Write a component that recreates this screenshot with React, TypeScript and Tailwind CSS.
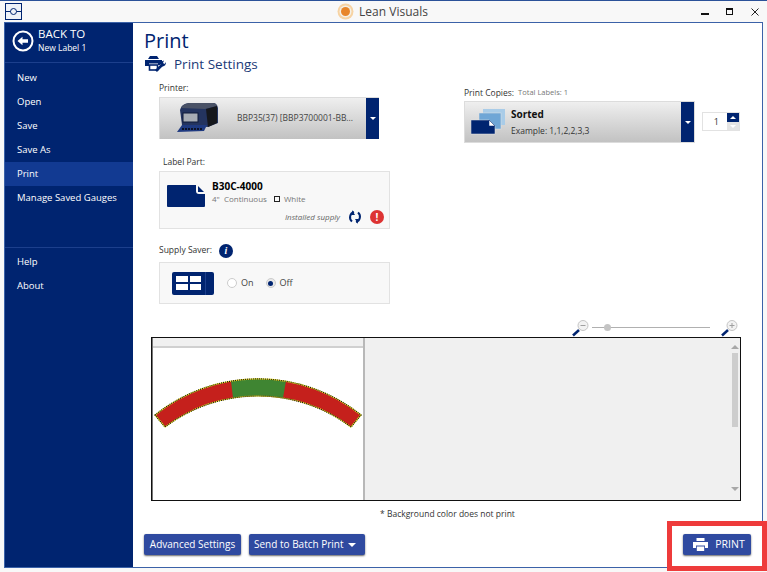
const font = { fontFamily: '"Open Sans", "Noto Sans", sans-serif' }

function NavItem({ label, active }: { label: string; active?: boolean }) {
  return (
    <div className={`h-6 pl-3 flex items-center text-[9.5px] text-white ${active ? 'bg-[#123a92]' : ''}`}>{label}</div>
  )
}

function Sidebar() {
  return (
    <div className="w-[128px] shrink-0 bg-[#002470] flex flex-col">
      <div className="h-10 flex items-center pl-[7px] pb-[4px] gap-[4px] border-b border-[#1c3f8c] shrink-0">
        <svg width="22" height="22" viewBox="0 0 22 22">
          <circle cx="11" cy="11" r="9.5" fill="none" stroke="white" strokeWidth="2" />
          <path d="M5.5 11 L10.5 6.8 V9.2 H16 V12.8 H10.5 V15.2 Z" fill="white" />
        </svg>
        <div className="text-white leading-none">
          <div className="text-[11.5px] leading-[14px]">BACK TO</div>
          <div className="text-[8.5px] leading-[13px]">New Label 1</div>
        </div>
      </div>
      <div className="pt-[3px] pb-[37px] border-b border-[#1c3f8c]">
        <NavItem label="New" />
        <NavItem label="Open" />
        <NavItem label="Save" />
        <NavItem label="Save As" />
        <NavItem label="Print" active />
        <NavItem label="Manage Saved Gauges" />
      </div>
      <div className="pt-[2px]">
        <NavItem label="Help" />
        <NavItem label="About" />
      </div>
    </div>
  )
}

function PrinterPic() {
  return (
    <svg width="41" height="31" viewBox="0 0 41 31">
      <path d="M3 8 Q4 2 12 1 H36 Q40 1 41 6 V21 L31 25 L5 23 Z" fill="#24345f" />
      <path d="M4 6 Q6 2 12 1 H36 Q39 1 40 4 L28 7 Z" fill="#4a5266" />
      <path d="M29 7 L40 4 V21 L31 25 Z" fill="#15171c" />
      <rect x="6" y="11" width="15" height="9" fill="#a8adb5" stroke="#0f1a3a" />
      <path d="M0 30 L5 23 H30 L27 29 Z" fill="#1f3a80" />
      <path d="M5 27 H26" stroke="#0b1228" strokeWidth="2" strokeDasharray="2 1" />
    </svg>
  )
}

function Caret() {
  return <div className="w-0 h-0 border-x-[3px] border-x-transparent border-t-[3px] border-t-white" />
}

function SupplyBox() {
  return (
    <div className="h-[58px] w-[231px] bg-[#f8f8f8] border border-[#e2e2e2] relative flex pl-[7px] pt-[12px]">
      <svg width="39" height="22" viewBox="0 0 39 22" className="mt-[1px]">
        <path d="M1 0 H29 V6 Q29 9 32 9 H38 V21 Q38 22 37 22 H1 Q0 22 0 21 V1 Q0 0 1 0 Z" fill="#002470" />
        <path d="M31 1 L37 7 H31 Z" fill="#002470" />
      </svg>
      <div className="ml-[6px] -mt-[4px]">
        <div className="text-[10px] leading-[13px] font-bold text-black">B30C-4000</div>
        <div className="text-[8px] leading-[11px] text-[#777] flex items-center">
          4" &nbsp;Continuous
          <span className="inline-block w-[6px] h-[6px] border border-[#222] ml-[7px] mr-[4px]" />
          White
        </div>
      </div>
      <div className="absolute right-[5px] bottom-[4px] flex items-center">
        <span className="text-[8px] italic text-[#666] mr-[8px]">Installed supply</span>
        <svg width="14" height="14" viewBox="0 0 14 14" fill="none" stroke="#002470" strokeWidth="2">
          <path d="M6 2 A5.5 5.5 0 0 0 4 11.5" />
          <path d="M8 12 A5.5 5.5 0 0 0 10 2.5" />
          <path d="M4 0 V5 H7 Z M10 14 V9 H7 Z" fill="#002470" strokeWidth="0" />
        </svg>
        <div className="ml-[8px] w-[14px] h-[14px] rounded-full bg-[#dd3333] text-white text-[10px] font-bold flex items-center justify-center leading-none">!</div>
      </div>
    </div>
  )
}

function SaverBox() {
  return (
    <div className="h-[42px] w-[231px] bg-[#f8f8f8] border border-[#e2e2e2] flex items-center pl-[12px]">
      <svg width="42" height="23" viewBox="0 0 42 23">
        <rect width="42" height="23" rx="2" fill="#002470" />
        <rect x="4" y="4" width="12" height="6" fill="white" />
        <rect x="18" y="4" width="11" height="6" fill="white" />
        <rect x="4" y="12" width="12" height="6" fill="white" />
        <rect x="18" y="12" width="11" height="6" fill="white" />
        <rect x="33" y="0" width="1" height="23" fill="#1c3f8c" />
      </svg>
      <div className="ml-[13px] w-[10px] h-[10px] rounded-full border border-[#ccc] bg-white" />
      <span className="ml-[4px] text-[9px] text-[#444]">On</span>
      <div className="ml-[12px] w-[10px] h-[10px] rounded-full border border-[#ccc] bg-[#e8e8e8] flex items-center justify-center">
        <div className="w-[5px] h-[5px] rounded-full bg-[#002470]" />
      </div>
      <span className="ml-[4px] text-[9px] text-[#444]">Off</span>
    </div>
  )
}

function SortedIcon() {
  return (
    <svg width="35" height="26" viewBox="0 0 35 26">
      <rect x="12" y="0" width="22" height="16" fill="#a9cce8" />
      <rect x="8" y="4" width="22" height="16" fill="#6fa6d6" stroke="#e4e4e4" strokeWidth="0.5" />
      <path d="M0 11 H18 L24 17 V25 H0 Z" fill="#002470" stroke="#e4e4e4" strokeWidth="0.5" />
      <path d="M18 11 L24 17 H18 Z" fill="white" stroke="#002470" strokeWidth="0.5" />
    </svg>
  )
}

function Magnifier({ plus }: { plus?: boolean }) {
  return (
    <svg width="18" height="17" viewBox="0 0 18 17">
      <circle cx="11" cy="5.5" r="5" fill="#f2f2f2" stroke="#c4c4c4" />
      <path d={plus ? 'M8.5 5.5 H13.5 M11 3 V8' : 'M8.5 5.5 H13.5'} stroke="#a0a0a0" />
      <path d="M7 10 L1 15.5" stroke="#002470" strokeWidth="2.5" />
    </svg>
  )
}

function Preview() {
  return (
    <div className="h-[164px] w-[590px] ml-[-4px] border border-[#111] flex">
      <div className="w-[211px] shrink-0 flex flex-col border-l border-[#777]">
        <div className="h-[10px] bg-[#f0f0f0] border-b-2 border-[#d0d0d0]" />
        <svg width="210" height="152" viewBox="0 0 210 152">
          <g transform="translate(-153 -348)">
            <path d="M155 415 A165 165 0 0 1 361 415 L351 427 A155 155 0 0 0 165 427 Z" fill="#c5201c" />
            <path d="M231 381 A165 165 0 0 1 286 381 L283 398 A155 155 0 0 0 233 398 Z" fill="#3f8532" />
            <path d="M155 415 A165 165 0 0 1 361 415 L351 427 A155 155 0 0 0 165 427 Z" fill="none" stroke="#f2ea2a" strokeWidth="1.2" />
            <path d="M155 415 A165 165 0 0 1 361 415 L351 427 A155 155 0 0 0 165 427 Z" fill="none" stroke="#111" strokeWidth="1.2" strokeDasharray="1 1" />
          </g>
        </svg>
      </div>
      <div className="flex-1 bg-[#f0f0f0] border-l-2 border-[#b8b8b8] flex justify-end pr-[1px]">
        <div className="w-[8px] flex flex-col items-center pt-[7px]">
          <div className="w-0 h-0 border-x-[4px] border-x-transparent border-b-[4px] border-b-[#a8a8a8]" />
          <div className="w-[6px] h-[74px] bg-[#cdcdcd] mt-[4px]" />
          <div className="flex-1" />
          <div className="w-0 h-0 border-x-[4px] border-x-transparent border-t-[4px] border-t-[#a8a8a8] mb-[9px]" />
        </div>
      </div>
    </div>
  )
}

function Main() {
  return (
    <div className="flex-1 bg-white flex flex-col pl-[11px] relative">
      <div className="h-[29px] text-[20px] leading-[29px] text-[#002470] pt-[3px]">Print</div>
      <div className="h-[24px] flex items-center pl-[1px]">
        <svg width="21" height="17" viewBox="0 0 21 17" fill="#002470">
          <path d="M5 0 H12 L14 3 H3 Z" />
          <path d="M0 4 H17 V7 L15 9 H13 V7.5 H4 V10 H0 Z" />
          <rect x="4.5" y="9" width="8" height="5" fill="none" stroke="#002470" strokeWidth="1.6" />
          <path d="M11 15 L17 9" stroke="#002470" strokeWidth="2.6" />
          <path d="M15.5 9.5 L16.5 5.5 L19 4.5 L18 7 L19.5 8 L21 6 Q21 10 17.5 10.5 Z" />
        </svg>
        <span className="ml-2 text-[13.5px] text-[#1b3a78]">Print Settings</span>
      </div>
      <div className="flex pl-[15px] mt-[4px]">
        <div className="w-[305px] shrink-0">
          <div className="text-[8.5px] h-[17px] leading-[12px] pt-[2px] text-[#333]">Printer:</div>
          <div className="h-[42px] w-[220px] flex bg-gradient-to-b from-[#efefef] to-[#c2c2c2] border-t border-l border-[#dcdcdc]">
            <div className="pl-[17px] pt-[4px] w-[77px] shrink-0"><PrinterPic /></div>
            <div className="flex-1 flex items-center text-[8.5px] text-[#444] whitespace-nowrap">BBP35(37) [BBP3700001-BB...</div>
            <div className="w-[13px] bg-[#002470] flex items-center justify-center"><Caret /></div>
          </div>
          <div className="text-[8.5px] h-[18px] mt-[14px] pl-[4px] pt-[3px] leading-[12px] text-[#333]">Label Part:</div>
          <SupplyBox />
          <div className="h-[33px] flex items-center text-[8.5px] text-[#333] pt-[10px]">
            Supply Saver:
            <div className="ml-[7px] w-[14px] h-[14px] rounded-full bg-[#002470] text-white text-[10px] font-bold italic flex items-center justify-center" style={{ fontFamily: '"Liberation Serif", serif' }}>i</div>
          </div>
          <SaverBox />
        </div>
        <div className="pt-[5px]">
          <div className="h-[16px] flex items-center">
            <span className="text-[8.5px] text-[#333]">Print Copies:</span>
            <span className="ml-[4px] text-[7.5px] text-[#777]">Total Labels: 1</span>
          </div>
          <div className="flex items-start">
            <div className="h-[42px] w-[231px] flex bg-gradient-to-b from-[#efefef] to-[#c2c2c2] border border-[#dcdcdc]">
              <div className="pl-[6px] pt-[7px] w-[46px] shrink-0"><SortedIcon /></div>
              <div className="flex-1 pt-[5px]">
                <div className="text-[10px] leading-[14px] font-bold text-[#111]">Sorted</div>
                <div className="text-[8.5px] leading-[13px] mt-[3px] text-[#333]">Example: 1,1,2,2,3,3</div>
              </div>
              <div className="w-[13px] bg-[#002470] flex items-center justify-center"><Caret /></div>
            </div>
            <div className="ml-[7px] mt-[11px] w-[38px] h-[19px] border border-[#e2e2e2] flex">
              <div className="flex-1 flex items-center justify-end pr-[8px] text-[9px] text-[#333]">1</div>
              <div className="w-[12px] flex flex-col">
                <div className="h-[9px] bg-[#002470] flex items-center justify-center">
                  <div className="w-0 h-0 border-x-[3px] border-x-transparent border-b-[3px] border-b-white" />
                </div>
                <div className="h-[8px] bg-[#e4e4e4] flex items-center justify-center">
                  <div className="w-0 h-0 border-x-[3px] border-x-transparent border-t-[3px] border-t-white" />
                </div>
              </div>
            </div>
          </div>
        </div>
      </div>
      <div className="h-[33px] flex items-end justify-end pr-[23px]">
        <Magnifier />
        <div className="w-[118px] h-[1px] bg-[#b0b0b0] relative ml-[2px] mr-[11px] mb-[9px]">
          <div className="absolute left-[12px] -top-[3px] w-[7px] h-[7px] rounded-full bg-[#c4c4c4]" />
        </div>
        <Magnifier plus />
      </div>
      <div className="pl-[11px]"><Preview /></div>
      <div className="h-[27px] w-[607px] flex items-center justify-center text-[8.5px] text-[#333]">* Background color does not print</div>
      <div className="flex items-center mt-[6px]">
        <button className="h-[21px] w-[97px] bg-[#2f4aa0] text-white text-[10px] rounded-[2px] shadow-[0_1px_2px_#666]">Advanced Settings</button>
        <button className="ml-[8px] h-[21px] w-[116px] bg-[#2f4aa0] text-white text-[10px] rounded-[2px] shadow-[0_1px_2px_#666] flex items-center pl-[5px] gap-[4px]">
          Send to Batch Print
          <span className="w-0 h-0 border-x-[4px] border-x-transparent border-t-[4px] border-t-white" />
        </button>
        <button className="ml-auto mr-[11px] h-[21px] w-[68px] bg-[#2f4aa0] text-white text-[10.5px] rounded-[2px] shadow-[0_1px_2px_#666] flex items-center justify-center gap-[7px] pl-[4px]">
          <svg width="15" height="13" viewBox="0 0 15 13" fill="white">
            <path d="M3.5 0 H11.5 V3 H3.5 Z" />
            <path d="M0 4 H15 V10 H12 V7.5 H3 V10 H0 Z" />
            <path d="M3.8 8.5 H11.2 V13 H3.8 Z" />
          </svg>
          PRINT
        </button>
      </div>
      <div className="absolute right-[-5px] bottom-[-4px] w-[100px] h-[50px] border-[5px] border-[#ee3b3b]" />
    </div>
  )
}

export default function App() {
  return (
    <div className="w-[767px] h-[572px] bg-[#f8f8f8] border-t border-[#2b5299] flex flex-col overflow-hidden" style={font}>
      <div className="h-[21px] shrink-0 flex items-center relative">
        <div className="ml-[5px] w-[17px] h-[17px] border border-[#002470] bg-[#eef2f8] flex items-center justify-center">
          <svg width="15" height="9" viewBox="0 0 15 9" fill="none" stroke="#002470">
            <circle cx="7.5" cy="4.5" r="3" />
            <path d="M0 4.5 H4.5 M10.5 4.5 H15" />
          </svg>
        </div>
        <div className="flex-1 flex items-center justify-center gap-[5px] text-[12px] text-[#444] pl-[42px]">
          <svg width="17" height="17" viewBox="0 0 17 17">
            <circle cx="8.5" cy="8.5" r="8" fill="#f7d3a3" />
            <circle cx="8.5" cy="8.5" r="6" fill="#f5f0e6" />
            <circle cx="8.5" cy="8.5" r="4.5" fill="#e8862a" />
          </svg>
          Lean Visuals
        </div>
        <div className="flex items-center pr-[8px] text-[#222]">
          <div className="w-[8px] h-[2px] bg-[#111] mt-[4px]" />
          <div className="ml-[17px] w-[7px] h-[7px] border border-t-2 border-[#111]" />
          <svg className="ml-[18px]" width="8" height="8" viewBox="0 0 8 8" stroke="#222"><path d="M0.5 0.5 L7.5 7.5 M7.5 0.5 L0.5 7.5" /></svg>
        </div>
      </div>
      <div className="h-[546px] mx-[4px] border border-[#3b62a8] flex shrink-0">
        <Sidebar />
        <Main />
      </div>
    </div>
  )
}
